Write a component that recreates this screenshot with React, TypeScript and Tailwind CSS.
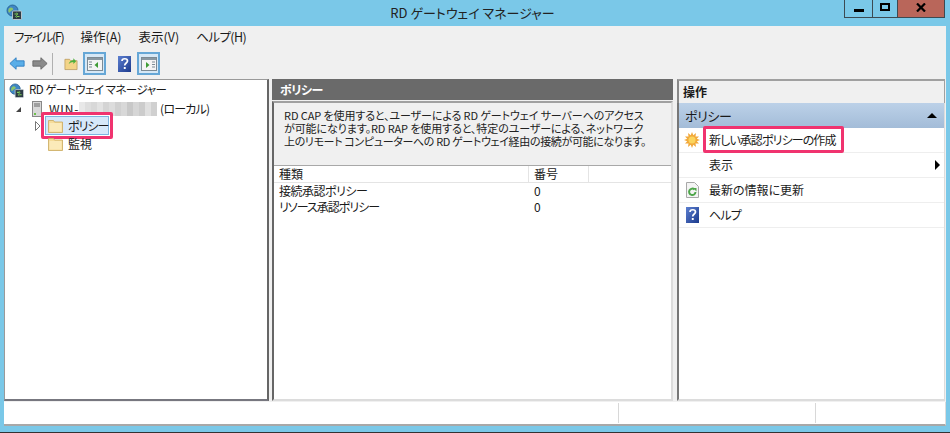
const FONT = "font-['Noto_Sans_CJK_JP','Noto_Sans',sans-serif] [font-feature-settings:'palt']";

const MOSAIC = ['#e8e8e8', '#dedede', '#d8d8d8', '#e2e2e2', '#d4d4d4', '#dcdcdc', '#d0d0d0', '#d8d8d8', '#c8c8c8', '#d6d6d6', '#cccccc', '#e0e0e0', '#d0d0d0'];

function AppIcon({ size = 16 }: { size?: number }) {
  return (
    <svg width={size} height={size} viewBox="0 0 16 16">
      <circle cx="6.5" cy="6.5" r="5.5" fill="#3f86c4" stroke="#1f5a8c" strokeWidth="0.8" />
      <path d="M3 4.5c1.5-1.5 3-1 4 0s-1 2-2 2.5-1 2-2 1.5-1-3 0-4z" fill="#8cc46a" />
      <rect x="6.5" y="7" width="9" height="8.5" rx="1" fill="#2d3b45" stroke="#cfd6da" strokeWidth="0.8" />
      <path d="M8.5 10h2.5M13.5 12.5H11" stroke="#7fd05a" strokeWidth="1.2" />
      <path d="M10.5 8.8 12 10l-1.500 1.200M11 11.300 9.500 12.500 11 13.700" fill="none" stroke="#7fd05a" strokeWidth="0.8" />
    </svg>
  );
}

function FolderIcon() {
  return (
    <svg width="15" height="14" viewBox="0 0 15 14" className="shrink-0">
      <path d="M.5 1.500h5l1 1.500h8v10.500H.5z" fill="#f6dc9a" stroke="#c9a85c" strokeWidth="0.8" />
      <rect x="1.500" y="4" width="12" height="8.500" fill="#fbeab9" />
    </svg>
  );
}

function HelpIcon() {
  return (
    <svg width="13" height="16" viewBox="0 0 13 16">
      <defs>
        <linearGradient id="helpg" x1="0" y1="0" x2="1" y2="1">
          <stop offset="0" stopColor="#5c7fd0" />
          <stop offset="1" stopColor="#1c3a8c" />
        </linearGradient>
      </defs>
      <rect x="0" y="0" width="13" height="16" fill="url(#helpg)" />
      <path d="M4 5c0-3 5.500-3 5.500 0 0 2-2.800 2-2.800 4.500" fill="none" stroke="#fff" strokeWidth="1.700" />
      <rect x="5.800" y="11" width="1.900" height="2" fill="#fff" />
    </svg>
  );
}

function Arrow({ flip, fill, stroke }: { flip?: boolean; fill: string; stroke: string }) {
  return (
    <svg width="16" height="15" viewBox="0 0 18 15" className={flip ? '-scale-x-100' : ''}>
      <path d="M1 7.500 8 1v3.500h9v6H8V14z" fill={fill} stroke={stroke} strokeWidth="1" />
    </svg>
  );
}

function PaneToggle({ side }: { side: 'left' | 'right' }) {
  return (
    <div className="w-[23px] h-[23px] border-2 border-[#66a7d6] bg-[#d6e8f6] flex items-center justify-center">
      <svg width="16" height="14" viewBox="0 0 16 14">
        <rect x="0.500" y="0.500" width="15" height="13" fill="#f4f4f4" stroke="#7c8a94" />
        <rect x="1" y="1" width="14" height="2" fill="#8a98a2" />
        {side === 'left' ? (
          <>
            <path d="M2 5h3M2 7.500h3M2 10h3" stroke="#7c8a94" />
            <path d="M11 5v6L7.500 8z" fill="#3f9c35" />
          </>
        ) : (
          <>
            <path d="M11 5h3M11 7.500h3M11 10h3" stroke="#7c8a94" />
            <path d="M5 5v6l3.500-3z" fill="#3f9c35" />
          </>
        )}
      </svg>
    </div>
  );
}

function ActionRow({ icon, label, pink, arrow, tight }: { icon?: React.ReactNode; label: string; pink?: boolean; arrow?: boolean; tight?: boolean }) {
  return (
    <div className="h-[25px] flex items-center border-b border-[#eeeeee]">
      <div className="w-[24px] flex justify-center shrink-0 pl-[2px]">{icon}</div>
      <span className={pink ? 'w-[141px] h-[27px] -mt-[1px] pl-[3px] flex items-center border-[3px] border-[#f0336f] rounded-[2px] z-10 bg-white whitespace-nowrap tracking-[-0.9px]' : tight ? 'ml-[6px] tracking-[-0.8px]' : 'ml-[6px]'}>
        {label}
      </span>
      {arrow && <div className="ml-auto mr-[4px] w-0 h-0 border-y-[5px] border-y-transparent border-l-[5px] border-l-black" />}
    </div>
  );
}

export default function App() {
  return (
    <div className={`${FONT} w-[950px] h-[433px] bg-[#7ac8e8] text-[12px] text-[#1a1a1a] flex flex-col overflow-hidden`}>
      {/* Title bar */}
      <div className="h-[26px] flex shrink-0">
        <div className="pl-[6px] pt-[4px]"><AppIcon size={16} /></div>
        <div className="flex-1 text-center text-[13px] text-[#222] pt-[3px] pl-[79px]">RD ゲートウェイ マネージャー</div>
        <div className="flex h-[18px] mr-[5px] border border-t-0 border-[#3c4a52]">
          <div className="w-[28px] flex items-center justify-center border-r border-[#3c4a52]">
            <div className="w-[10px] h-[3px] bg-black mt-[3px]" />
          </div>
          <div className="w-[25px] flex items-center justify-center border-r border-[#3c4a52]">
            <div className="w-[10px] h-[8px] border-2 border-black -mt-[3px]" />
          </div>
          <div className="w-[46px] bg-[#b9665a] flex items-center justify-center">
            <svg width="10" height="9" viewBox="0 0 10 9" className="-mt-[2px]"><path d="M1 .5 9 8.500M9 .5 1 8.500" stroke="#000" strokeWidth="2.200" /></svg>
          </div>
        </div>
      </div>

      {/* Window body */}
      <div className="mx-[4px] w-[942px] h-[399px] bg-[#f0f0f0] flex flex-col shrink-0">
        {/* Menu */}
        <div className="h-[23px] flex items-center pl-[10px] gap-[17px] text-[12.500px] shrink-0">
          <span className="tracking-[-1.3px]">ファイル(F)</span>
          <span>操作(A)</span>
          <span>表示(V)</span>
          <span className="tracking-[-0.6px]">ヘルプ(H)</span>
        </div>
        {/* Toolbar */}
        <div className="h-[29px] flex items-center pl-[5px] shrink-0">
          <Arrow fill="#5aaee8" stroke="#2d7cc0" />
          <div className="w-[7px]" />
          <Arrow flip fill="#8a8a8a" stroke="#666" />
          <div className="w-px h-[22px] bg-[#b0b0b0] ml-[4px] mr-[11px]" />
          <svg width="14" height="15" viewBox="0 0 15 15" className="mr-[5px]">
            <path d="M1 3h5l1 1.500h7V14H1z" fill="#f3d488" stroke="#b8975a" strokeWidth="0.8" />
            <path d="M5 8c1-3 3-4 5-4V2l3 3-3 3V6C8 6 6.500 7 5 8z" fill="#4caf3c" />
          </svg>
          <PaneToggle side="left" />
          <div className="w-[12px]" />
          <HelpIcon />
          <div className="w-[6px]" />
          <PaneToggle side="right" />
        </div>

        {/* Panels */}
        <div className="flex h-[322px] mt-[1px] shrink-0">
          {/* Tree */}
          <div className="w-[265px] bg-white border border-[#9a9a9a] border-r-2 border-b-2 border-r-[#666] border-b-[#77777f] pl-[3px] shrink-0">
            <div className="h-[20px] flex items-center">
              <div className="ml-[1px] flex"><AppIcon size={15} /></div>
              <span className="ml-[5px] text-[11.500px] tracking-[-0.5px]">RD ゲートウェイ マネージャー</span>
            </div>
            <div className="h-[18px] flex items-center">
              <div className="ml-[8px] w-0 h-0 border-l-[5px] border-l-transparent border-b-[5px] border-b-[#444]" />
              <svg width="10" height="16" viewBox="0 0 10 16" className="ml-[11px]">
                <rect x="0.500" y="0.500" width="9" height="15" fill="#d8d8d8" stroke="#888" />
                <path d="M2 3h6M2 5h6" stroke="#666" />
                <rect x="2" y="12" width="2" height="2" fill="#6cc04a" />
              </svg>
              <span className="ml-[7px] tracking-[0.8px]">WIN-</span>
              <div className="flex h-[14px] w-[78px]">
                {MOSAIC.map((c, i) => (
                  <div key={i} className="w-[6px] h-full" style={{ backgroundColor: c }} />
                ))}
              </div>
              <span className="ml-[3px] tracking-[-0.8px]">(ローカル)</span>
            </div>
            <div className="h-[27px] flex items-center -mt-[6px]">
              <svg width="6" height="10" viewBox="0 0 6 10" className="ml-[27px] shrink-0">
                <path d="M.5.500 5 5 .5 9.500z" fill="#fff" stroke="#777" />
              </svg>
              <div className="h-[27px] w-[72px] border-[3px] border-[#f0336f] rounded-[2px] flex items-center bg-white">
                <div className="h-[19px] w-full mx-[1px] border border-[#7db4e0] bg-[#d6e8fa] flex items-center pl-[2px] gap-[5px] whitespace-nowrap">
                  <FolderIcon />
                  <span className="tracking-[-1px]">ポリシー</span>
                </div>
              </div>
            </div>
            <div className="h-[14px] flex items-center pl-[40px] gap-[5px] -mt-[2px]">
              <FolderIcon />
              <span>監視</span>
            </div>
          </div>

          {/* Center */}
          <div className="w-[401px] ml-[3px] flex flex-col shrink-0">
            <div className="h-[21px] bg-[#6a6a6a] text-white font-bold flex items-center pl-[8px] tracking-[-0.5px] shrink-0">ポリシー</div>
            <div className="flex-1 border-2 border-t-[#a0a0a0] border-[#dcdcdc] border-l-[#666] flex flex-col min-h-0 mt-[1px]">
              <div className="h-[63px] pt-[6px] pl-[10px] text-[11px] tracking-[-0.1px] leading-[13px] text-[#222] border-b border-[#a8a8a8] shrink-0 whitespace-nowrap">
                <div>RD CAP を使用すると、ユーザーによる RD ゲートウェイ サーバーへのアクセス</div>
                <div>が可能になります。RD RAP を使用すると、特定のユーザーによる、ネットワーク</div>
                <div className="tracking-[-0.35px]">上のリモート コンピューターへの RD ゲートウェイ経由の接続が可能になります。</div>
              </div>
              <div className="flex-1 bg-white">
                <div className="h-[17px] flex border-b border-[#e4e4e4]">
                  <div className="w-[255px] pl-[5px] border-r border-[#e4e4e4] leading-[16px]">種類</div>
                  <div className="w-[60px] pl-[5px] border-r border-[#e4e4e4] leading-[16px]">番号</div>
                </div>
                <div className="h-[16px] flex items-center">
                  <div className="w-[255px] pl-[5px] tracking-[-0.5px]">接続承認ポリシー</div>
                  <div className="pl-[5px]">0</div>
                </div>
                <div className="h-[16px] flex items-center">
                  <div className="w-[255px] pl-[5px] tracking-[-1px]">リソース承認ポリシー</div>
                  <div className="pl-[5px]">0</div>
                </div>
              </div>
            </div>
          </div>

          {/* Actions */}
          <div className="w-[268px] ml-[4px] flex flex-col shrink-0">
            <div className="h-[24px] border border-[#a0a0a0] border-b-0 border-t-2 border-l-2 border-l-[#888] font-bold flex items-center pl-[4px] shrink-0">操作</div>
            <div className="flex-1 bg-white border-l-2 border-[#777] border-r border-r-[#dcdcdc] border-b-2 border-b-[#dcdcdc] flex flex-col">
              <div className="h-[25px] bg-gradient-to-b from-[#bcd1e8] to-[#a3bcd8] flex items-center pl-[6px] text-[13px] tracking-[-0.4px] shrink-0">
                <span>ポリシー</span>
                <div className="ml-auto mr-[7px] w-0 h-0 border-x-[5px] border-x-transparent border-b-[5px] border-b-black" />
              </div>
              <ActionRow
                pink
                label="新しい承認ポリシーの作成"
                icon={
                  <svg width="16" height="16" viewBox="0 0 16 16">
                    <path d="M8 0l1.300 3.200L12 1l-.5 3.500L15 4.500l-2.200 2.300L16 8l-3.200 1.200L15 11.500l-3.500 0 .5 3.500-2.700-2.200L8 16l-1.300-3.200L4 15l.5-3.500L1 11.500l2.200-2.300L0 8l3.200-1.200L1 4.500l3.500 0L4 1l2.700 2.200z" fill="#f2a93b" />
                    <circle cx="8" cy="8" r="3.500" fill="#fbd45c" />
                  </svg>
                }
              />
              <ActionRow label="表示" arrow />
              <ActionRow
                label="最新の情報に更新"
                icon={
                  <svg width="13" height="16" viewBox="0 0 13 16">
                    <path d="M.5.5h8l4 4v11H.5z" fill="#f4f4f4" stroke="#a8a8a8" />
                    <path d="M9.500 10A3.200 3.200 0 1 1 8.500 7.500" fill="none" stroke="#4ea64a" strokeWidth="2" />
                    <path d="M7 6h3.500v3.500z" fill="#4ea64a" />
                  </svg>
                }
              />
              <ActionRow label="ヘルプ" tight icon={<HelpIcon />} />
            </div>
          </div>
        </div>

        {/* Status bar */}
        <div className="h-[24px] mt-[1px] bg-white border-b-2 border-b-[#a8a8a8] border-r border-r-[#dcdcdc] flex justify-end shrink-0">
          <div className="w-[197px] border-l border-[#d8d8d8] my-[1px]" />
          <div className="w-[130px] border-l border-[#d8d8d8] my-[1px]" />
        </div>
      </div>

      <div className="mt-auto h-px bg-[#333]" />
    </div>
  );
}
